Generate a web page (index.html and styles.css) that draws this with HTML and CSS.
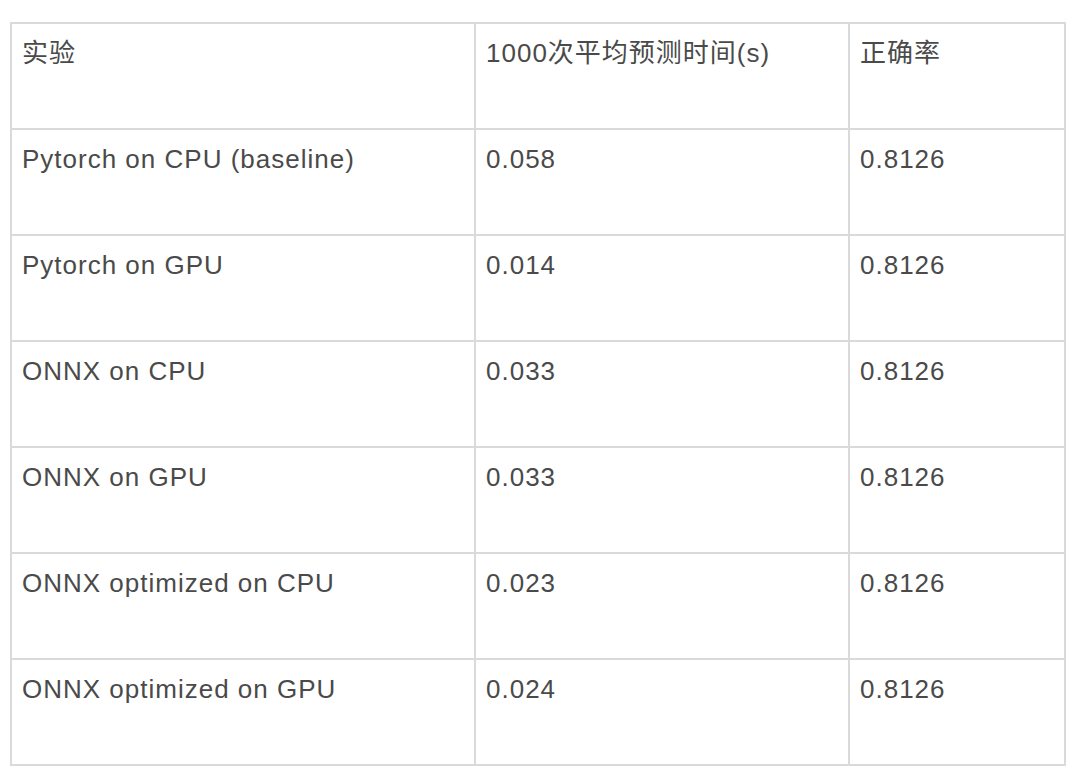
FILE: index.html
```html
<!DOCTYPE html>
<html lang="zh-CN">
<head>
<meta charset="utf-8">
<title>实验</title>
<link rel="stylesheet" href="styles.css">
</head>
<body>
<table class="results">
  <colgroup>
    <col class="c1"><col class="c2"><col class="c3">
  </colgroup>
  <tr><td>实验</td><td>1000次平均预测时间(s)</td><td>正确率</td></tr>
  <tr><td>Pytorch on CPU (baseline)</td><td>0.058</td><td>0.8126</td></tr>
  <tr><td>Pytorch on GPU</td><td>0.014</td><td>0.8126</td></tr>
  <tr><td>ONNX on CPU</td><td>0.033</td><td>0.8126</td></tr>
  <tr><td>ONNX on GPU</td><td>0.033</td><td>0.8126</td></tr>
  <tr><td>ONNX optimized on CPU</td><td>0.023</td><td>0.8126</td></tr>
  <tr><td>ONNX optimized on GPU</td><td>0.024</td><td>0.8126</td></tr>
</table>
</body>
</html>
```
FILE: styles.css
```css
html, body {
  margin: 0;
  padding: 0;
  background: #ffffff;
}
body {
  padding: 22px 0 0 10px;
  font-family: "Liberation Sans", "Noto Sans CJK SC", sans-serif;
  color: #4a4a4a;
}
.results {
  border-collapse: collapse;
  table-layout: fixed;
  width: 1054px;
}
.c1 { width: 464px; }
.c2 { width: 374px; }
.c3 { width: 216px; }
.results td {
  border: 2px solid #dadada;
  height: 106px;
  box-sizing: border-box;
  padding: 13px 10px 0 10px;
  vertical-align: top;
  font-size: 26px;
  line-height: 32px;
  letter-spacing: 1px;
}
```
